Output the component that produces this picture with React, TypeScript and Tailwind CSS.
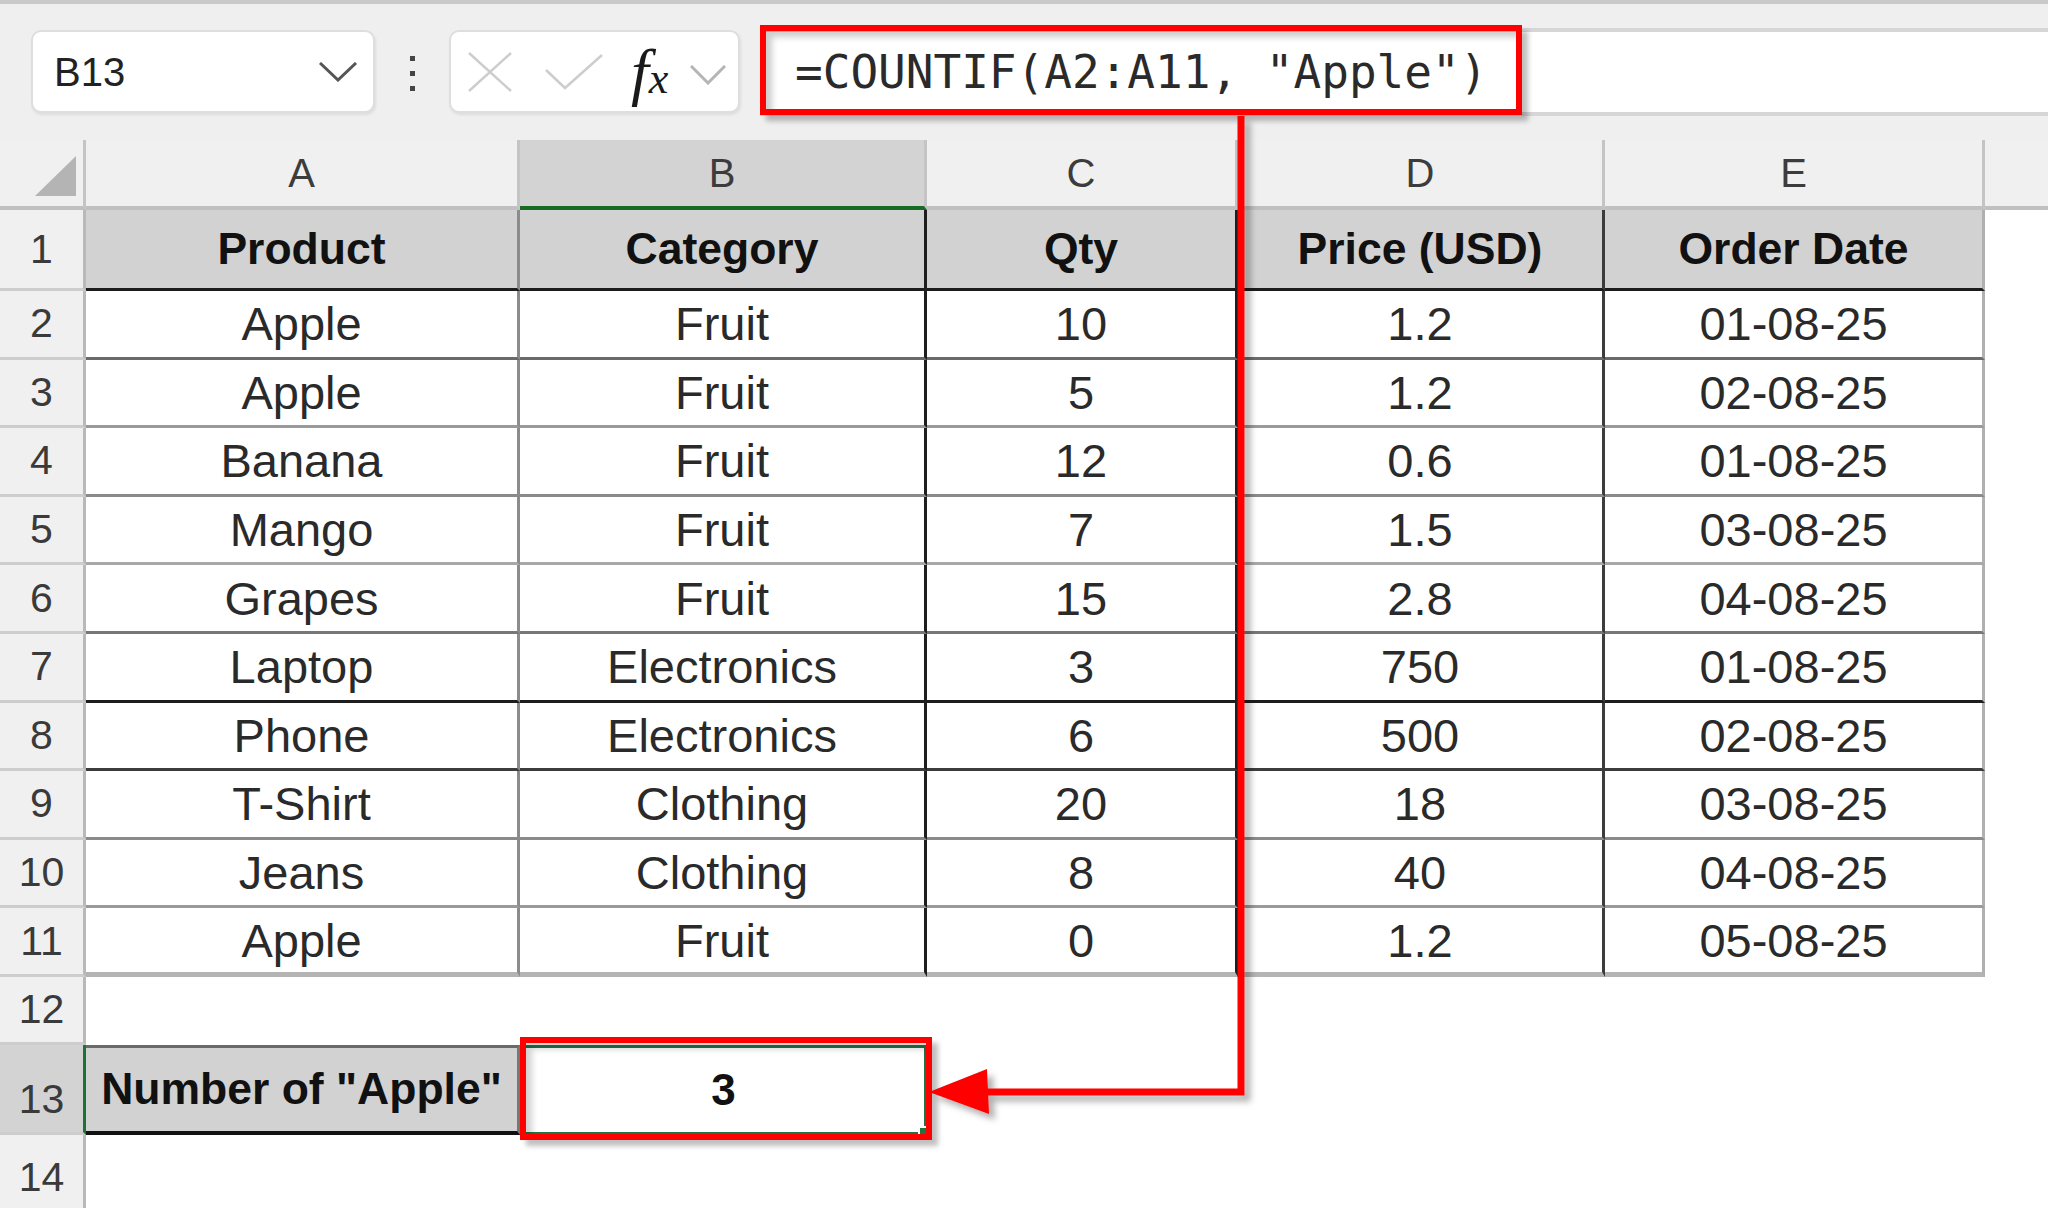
import type { FC } from 'react';

// sheet columns: row header, A..E, then the rest of the window
const gridCols = 'grid grid-cols-[86px_434px_407px_311px_367px_380px_1fr]';
const sans = "font-['Liberation_Sans',sans-serif]";

const colRight = [
  'border-r-[#8c8c8c]',
  'border-r-[#1e1e1e]',
  'border-r-[#1e1e1e]',
  'border-r-[#3c3c3c]',
  'border-r-[#b0b0b0]',
];

const rows: { cells: string[]; line: string }[] = [
  { cells: ['Apple', 'Fruit', '10', '1.2', '01-08-25'], line: 'border-b-[#6a6a6a]' },
  { cells: ['Apple', 'Fruit', '5', '1.2', '02-08-25'], line: 'border-b-[#9a9a9a]' },
  { cells: ['Banana', 'Fruit', '12', '0.6', '01-08-25'], line: 'border-b-[#8a8a8a]' },
  { cells: ['Mango', 'Fruit', '7', '1.5', '03-08-25'], line: 'border-b-[#a8a8a8]' },
  { cells: ['Grapes', 'Fruit', '15', '2.8', '04-08-25'], line: 'border-b-[#777777]' },
  { cells: ['Laptop', 'Electronics', '3', '750', '01-08-25'], line: 'border-b-[#1e1e1e]' },
  { cells: ['Phone', 'Electronics', '6', '500', '02-08-25'], line: 'border-b-[#3c3c3c]' },
  { cells: ['T-Shirt', 'Clothing', '20', '18', '03-08-25'], line: 'border-b-[#8a8a8a]' },
  { cells: ['Jeans', 'Clothing', '8', '40', '04-08-25'], line: 'border-b-[#9a9a9a]' },
  { cells: ['Apple', 'Fruit', '0', '1.2', '05-08-25'], line: 'border-b-[#b4b4b4]' },
];

const headers = ['Product', 'Category', 'Qty', 'Price (USD)', 'Order Date'];

const RowHead: FC<{ n: number; className?: string }> = ({ n, className = '' }) => (
  <div
    className={`flex items-center justify-center border-r-[3px] border-b-[3px] border-r-[#b9b9b9] border-b-[#cdcdcd] bg-[#f0f0f0] text-[41px] leading-none text-[#3a3a3a] ${className}`}
  >
    {n}
  </div>
);

const Toolbar: FC = () => (
  <div className="bg-[#efefef]">
    <div className="h-[4px] bg-[#c9c9c9]" />
    <div className="flex h-[136px] items-start pt-[26px]">
      <div className="ml-[31px] flex h-[83px] w-[344px] items-center justify-between rounded-[10px] border-2 border-[#dedede] bg-white pr-[16px] pl-[21px] shadow-[1px_2px_3px_rgba(0,0,0,0.08)]">
        <span className="text-[40px] leading-none text-[#222]">B13</span>
        <svg width="38" height="20" viewBox="0 0 38 20">
          <polyline points="1,1 19,18 37,1" fill="none" stroke="#555" strokeWidth="3" />
        </svg>
      </div>

      <div className="ml-[33px] mt-[26px] flex w-[8px] flex-col items-center gap-[10px]">
        <span className="h-[5px] w-[5px] bg-[#444]" />
        <span className="h-[5px] w-[5px] bg-[#444]" />
        <span className="h-[5px] w-[5px] bg-[#444]" />
      </div>

      <div className="ml-[33px] flex h-[83px] w-[291px] items-center rounded-[10px] border-2 border-[#dedede] bg-white pl-[17px] shadow-[1px_2px_3px_rgba(0,0,0,0.08)]">
        <svg width="44" height="40" viewBox="0 0 44 40">
          <line x1="1" y1="1" x2="43" y2="39" stroke="#cdcdcd" strokeWidth="2.5" />
          <line x1="43" y1="1" x2="1" y2="39" stroke="#cdcdcd" strokeWidth="2.5" />
        </svg>
        <svg className="ml-[33px]" width="58" height="36" viewBox="0 0 58 36">
          <polyline points="1,16 20,34 57,1" fill="none" stroke="#cdcdcd" strokeWidth="2.5" />
        </svg>
        <span className="ml-[28px] flex items-baseline font-['Liberation_Serif',serif] italic leading-none text-[#1a1a1a]">
          <span className="text-[64px]">f</span>
          <span className="text-[44px]">x</span>
        </span>
        <svg className="ml-[22px] mt-[6px]" width="36" height="20" viewBox="0 0 36 20">
          <polyline points="1,1 18,18 35,1" fill="none" stroke="#b5b5b5" strokeWidth="3" />
        </svg>
      </div>

      <div className="relative -mt-[2px] ml-[20px] flex h-[88px] flex-1 items-center border-y-4 border-[#d6d6d6] bg-white pl-[35px]">
        <span className="font-['DejaVu_Sans_Mono',monospace] text-[46px] leading-none text-[#2a2a2a]">
          =COUNTIF(A2:A11, "Apple")
        </span>
        <div className="absolute -top-[7px] left-0 h-[90px] w-[762px] border-[6px] border-[#ff0000] shadow-[6px_6px_5px_rgba(0,0,0,0.25),inset_6px_6px_6px_rgba(0,0,0,0.2)]" />
      </div>
    </div>
  </div>
);

const Sheet: FC = () => (
  <div className={sans}>
    {/* column letters */}
    <div className={`${gridCols} h-[70px]`}>
      <div className="relative border-r-[3px] border-b-4 border-r-[#c4c4c4] border-b-[#c0c0c0] bg-[#f0f0f0]">
        <svg className="absolute right-[7px] bottom-[10px]" width="41" height="40" viewBox="0 0 41 40">
          <polygon points="41,0 41,40 0,40" fill="#b4b4b4" />
        </svg>
      </div>
      {['A', 'B', 'C', 'D', 'E'].map((l) => (
        <div
          key={l}
          className={`flex items-center justify-center border-r-[3px] border-b-4 border-r-[#c4c4c4] text-[40px] leading-none text-[#3c3c3c] ${
            l === 'B' ? 'border-b-[#146c25] bg-[#d3d3d3]' : 'border-b-[#c0c0c0] bg-[#f0f0f0]'
          }`}
        >
          {l}
        </div>
      ))}
      <div className="border-b-4 border-b-[#c0c0c0] bg-[#f0f0f0]" />
    </div>

    {/* row 1: table headings */}
    <div className={`${gridCols} h-[81px]`}>
      <RowHead n={1} />
      {headers.map((h, i) => (
        <div
          key={h}
          className={`flex items-center justify-center border-r-[3px] border-b-[3px] border-b-[#1c1c1c] bg-[#d2d2d2] text-[44.5px] leading-none font-bold text-[#111] ${colRight[i]} ${
            i === 4 ? 'border-r-4' : ''
          }`}
        >
          {h}
        </div>
      ))}
      <div />
    </div>

    {/* rows 2-11 */}
    {rows.map((r, ri) => (
      <div key={ri} className={`${gridCols} h-[68.6px]`}>
        <RowHead n={ri + 2} />
        {r.cells.map((c, ci) => (
          <div
            key={ci}
            className={`flex items-center justify-center border-r-[3px] bg-white text-[47px] leading-none text-[#2a2a2a] ${colRight[ci]} ${r.line} ${
              ri === 9 ? 'border-b-[5px]' : 'border-b-[3px]'
            } ${ci === 4 ? 'border-r-4' : ''}`}
          >
            {c}
          </div>
        ))}
        <div />
      </div>
    ))}

    {/* row 12 */}
    <div className={`${gridCols} h-[68px]`}>
      <RowHead n={12} />
    </div>

    {/* row 13: result */}
    <div className={`${gridCols} h-[90px]`}>
      <div className="flex items-end justify-center border-r-[3px] border-b-[3px] border-r-[#1d7236] border-b-[#cdcdcd] bg-[#d3d3d3] pb-[12px] text-[41px] leading-none text-[#3a3a3a]">
        13
      </div>
      <div className="flex items-center justify-center border-t-[3px] border-r-[3px] border-b-4 border-t-[#6a6a6a] border-r-[#777] border-b-[#111] bg-[#d2d2d2] text-[44.5px] leading-none font-bold whitespace-nowrap text-[#111]">
        Number of "Apple"
      </div>
      <div className="relative flex items-center justify-center border-[3px] border-[#217346] bg-white text-[44px] leading-none font-bold text-[#111]">
        3
        <div className="absolute -top-[11px] -left-[3px] h-[103px] w-[412px] border-[6px] border-[#ff0000] shadow-[6px_6px_5px_rgba(0,0,0,0.25),inset_6px_6px_6px_rgba(0,0,0,0.18)]" />
        <div className="absolute -right-[2px] -bottom-[2px] h-[8px] w-[8px] border-t-2 border-l-2 border-white bg-[#217346]" />
      </div>
    </div>

    {/* row 14 */}
    <div className={`${gridCols} h-[80px]`}>
      <RowHead n={14} className="items-start pt-[22px]" />
    </div>
  </div>
);

export default function App() {
  return (
    <div className={`relative h-[1208px] w-[2048px] overflow-hidden bg-white ${sans}`}>
      <Toolbar />
      <Sheet />

      {/* connector from formula to result cell */}
      <svg className="pointer-events-none absolute top-0 left-0" width="2048" height="1208">
        <defs>
          <filter id="drop" x="-10%" y="-10%" width="130%" height="130%">
            <feDropShadow dx="6" dy="6" stdDeviation="3" floodColor="#000" floodOpacity="0.3" />
          </filter>
        </defs>
        <g filter="url(#drop)">
          <polyline points="1241,116 1241,1092 984,1092" fill="none" stroke="#ff0000" strokeWidth="7" />
          <polygon points="929,1092 987,1069 989,1114" fill="#ff0000" />
        </g>
      </svg>
    </div>
  );
}
